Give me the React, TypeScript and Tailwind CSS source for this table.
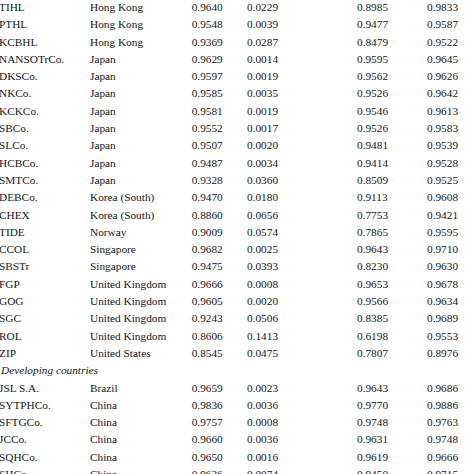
const developed: string[][] = [
  ["TIHL", "Hong Kong", "0.9640", "0.0229", "0.8985", "0.9833"],
  ["PTHL", "Hong Kong", "0.9548", "0.0039", "0.9477", "0.9587"],
  ["KCBHL", "Hong Kong", "0.9369", "0.0287", "0.8479", "0.9522"],
  ["NANSOTrCo.", "Japan", "0.9629", "0.0014", "0.9595", "0.9645"],
  ["DKSCo.", "Japan", "0.9597", "0.0019", "0.9562", "0.9626"],
  ["NKCo.", "Japan", "0.9585", "0.0035", "0.9526", "0.9642"],
  ["KCKCo.", "Japan", "0.9581", "0.0019", "0.9546", "0.9613"],
  ["SBCo.", "Japan", "0.9552", "0.0017", "0.9526", "0.9583"],
  ["SLCo.", "Japan", "0.9507", "0.0020", "0.9481", "0.9539"],
  ["HCBCo.", "Japan", "0.9487", "0.0034", "0.9414", "0.9528"],
  ["SMTCo.", "Japan", "0.9328", "0.0360", "0.8509", "0.9525"],
  ["DEBCo.", "Korea (South)", "0.9470", "0.0180", "0.9113", "0.9608"],
  ["CHEX", "Korea (South)", "0.8860", "0.0656", "0.7753", "0.9421"],
  ["TIDE", "Norway", "0.9009", "0.0574", "0.7865", "0.9595"],
  ["CCOL", "Singapore", "0.9682", "0.0025", "0.9643", "0.9710"],
  ["SBSTr", "Singapore", "0.9475", "0.0393", "0.8230", "0.9630"],
  ["FGP", "United Kingdom", "0.9666", "0.0008", "0.9653", "0.9678"],
  ["GOG", "United Kingdom", "0.9605", "0.0020", "0.9566", "0.9634"],
  ["SGC", "United Kingdom", "0.9243", "0.0506", "0.8385", "0.9689"],
  ["ROL", "United Kingdom", "0.8606", "0.1413", "0.6198", "0.9553"],
  ["ZIP", "United States", "0.8545", "0.0475", "0.7807", "0.8976"],
];

const developing: string[][] = [
  ["JSL S.A.", "Brazil", "0.9659", "0.0023", "0.9643", "0.9686"],
  ["SYTPHCo.", "China", "0.9836", "0.0036", "0.9770", "0.9886"],
  ["SFTGCo.", "China", "0.9757", "0.0008", "0.9748", "0.9763"],
  ["JCCo.", "China", "0.9660", "0.0036", "0.9631", "0.9748"],
  ["SQHCo.", "China", "0.9650", "0.0016", "0.9619", "0.9666"],
  ["SHCo.", "China", "0.9636", "0.0074", "0.9450", "0.9715"],
];

function Row({ cells }: { cells: string[] }) {
  return (
    <div className="grid h-[17.3px] grid-cols-[91px_101.7px_55.3px_110px_70px_1fr] whitespace-nowrap">
      {cells.map((c, i) => (
        <span key={i}>{c}</span>
      ))}
    </div>
  );
}

export default function App() {
  return (
    <div className="h-[474px] w-[474px] overflow-hidden bg-white text-[#161616]">
      <div className="-ml-[1px] -mt-[1px] font-['Liberation_Serif',serif] text-[11.3px] leading-[17.3px]">
        {developed.map((r) => (
          <Row key={r[0]} cells={r} />
        ))}
        <div className="h-[17.3px] pl-[2px] italic">Developing countries</div>
        {developing.map((r) => (
          <Row key={r[0]} cells={r} />
        ))}
      </div>
    </div>
  );
}
